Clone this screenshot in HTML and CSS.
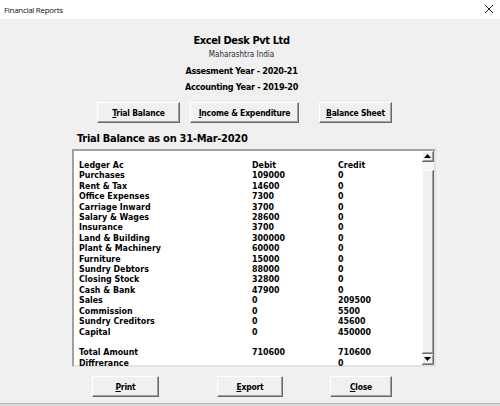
FILE: index.html
```html
<!DOCTYPE html>
<html lang="en">
  <head>
    <meta charset="UTF-8" />
    <title>Financial Reports</title>
    <link rel="stylesheet" href="styles.css">
  </head>

  <body>
    <div class="window">
      <div class="titlebar">
        <span class="title">Financial Reports</span>
        <svg class="close" width="10" height="10" viewBox="0 0 10 10">
          <path d="M1 1 L9 9 M9 1 L1 9" stroke="#222" stroke-width="1" fill="none" />
        </svg>
      </div>

      <div class="form">
        <div class="header">
          <h1>Excel Desk Pvt Ltd</h1>
          <p class="place">Maharashtra India</p>
          <p class="year">Assesment Year - 2020-21</p>
          <p class="year">Accounting Year - 2019-20</p>
        </div>

        <div class="tabs">
          <button class="btn tab-trial"><u>T</u>rial Balance</button>
          <button class="btn tab-income"><u>I</u>ncome &amp; Expenditure</button>
          <button class="btn tab-sheet"><u>B</u>alance Sheet</button>
        </div>

        <h2 class="caption">Trial Balance as on 31-Mar-2020</h2>

        <div class="listbox">
          <div class="rows">
            <span>Ledger Ac</span><span>Debit</span><span>Credit</span>
            <span>Purchases</span><span>109000</span><span>0</span>
            <span>Rent &amp; Tax</span><span>14600</span><span>0</span>
            <span>Office Expenses</span><span>7300</span><span>0</span>
            <span>Carriage Inward</span><span>3700</span><span>0</span>
            <span>Salary &amp; Wages</span><span>28600</span><span>0</span>
            <span>Insurance</span><span>3700</span><span>0</span>
            <span>Land &amp; Building</span><span>300000</span><span>0</span>
            <span>Plant &amp; Machinery</span><span>60000</span><span>0</span>
            <span>Furniture</span><span>15000</span><span>0</span>
            <span>Sundry Debtors</span><span>88000</span><span>0</span>
            <span>Closing Stock</span><span>32800</span><span>0</span>
            <span>Cash &amp; Bank</span><span>47900</span><span>0</span>
            <span>Sales</span><span>0</span><span>209500</span>
            <span>Commission</span><span>0</span><span>5500</span>
            <span>Sundry Creditors</span><span>0</span><span>45600</span>
            <span>Capital</span><span>0</span><span>450000</span>
            <span>&nbsp;</span><span></span><span></span>
            <span>Total Amount</span><span>710600</span><span>710600</span>
            <span>Diffrerance</span><span></span><span>0</span>
          </div>
          <div class="scrollbar">
            <div class="arrow up">
              <svg width="7" height="4" viewBox="0 0 7 4"><path d="M3.5 0 L7 4 L0 4 Z" fill="#000" /></svg>
            </div>
            <div class="track"></div>
            <div class="thumb"></div>
            <div class="arrow down">
              <svg width="7" height="4" viewBox="0 0 7 4"><path d="M0 0 L7 0 L3.5 4 Z" fill="#000" /></svg>
            </div>
          </div>
        </div>

        <div class="actions">
          <button class="btn act-print"><u>P</u>rint</button>
          <button class="btn act-export"><u>E</u>xport</button>
          <button class="btn act-close"><u>C</u>lose</button>
        </div>
      </div>
      <div class="edge"></div>
    </div>
  </body>
</html>
```

FILE: styles.css
```css
body {
  margin: 0;
  background: #f0f0f0;
  font-family: "DejaVu Sans Condensed", "DejaVu Sans", sans-serif;
  color: #000;
}

.window {
  width: 500px;
  height: 406px;
  display: flex;
  flex-direction: column;
}

.titlebar {
  height: 19px;
  background: #fff;
  display: flex;
  align-items: center;
  justify-content: space-between;
  padding: 0 6px 0 4px;
}

.title {
  font-family: "Open Sans", "Noto Sans", sans-serif;
  font-size: 8px;
  letter-spacing: -0.3px;
  color: #111;
}

.close {
  margin-top: -2px;
}

.form {
  flex: 1;
  background: #f0f0f0;
}

.header {
  text-align: center;
  padding: 14px 17px 0 0;
}

.header h1 {
  margin: 0;
  font-size: 11px;
  letter-spacing: -0.4px;
  line-height: 16px;
  font-weight: bold;
}

.header p {
  margin: 0;
}

.place {
  font-size: 8px;
  line-height: 12px;
  color: #2b2b3a;
}

.year {
  font-size: 9px;
  letter-spacing: -0.28px;
  line-height: 16px;
  font-weight: bold;
}

.place + .year {
  margin-top: 2px;
}

.btn {
  height: 21px;
  padding: 0;
  background: #f0f0f0;
  border: 1px solid;
  border-color: #fff #696969 #696969 #fff;
  box-shadow: inset -1px -1px 0 #a0a0a0;
  font-family: "DejaVu Sans Condensed", "DejaVu Sans", sans-serif;
  font-size: 8.5px;
  letter-spacing: -0.2px;
  font-weight: bold;
  color: #000;
}

.tabs {
  display: flex;
  margin-top: 7px;
  padding-left: 97px;
}

.tab-trial {
  width: 83px;
}

.tab-income {
  width: 109px;
  margin-left: 10px;
}

.tab-sheet {
  width: 73px;
  margin-left: 20px;
}

.caption {
  margin: 8px 0 0 77px;
  font-size: 11px;
  letter-spacing: -0.27px;
  line-height: 16px;
  font-weight: bold;
}

.listbox {
  display: flex;
  width: 360px;
  height: 214px;
  margin: 2px 0 0 72px;
  background: #fff;
  border: 2px solid;
  border-color: #a0a0a0 #e3e3e3 #e3e3e3 #a0a0a0;
}

.rows {
  flex: 1;
  display: grid;
  grid-template-columns: 173px 86px auto;
  grid-auto-rows: 10.42px;
  align-content: start;
  padding: 9px 0 0 5px;
  font-size: 8.8px;
  line-height: 10.42px;
  font-weight: bold;
  white-space: nowrap;
}

.scrollbar {
  width: 12px;
  display: flex;
  flex-direction: column;
  background: #f0f0f0;
}

.arrow {
  height: 10px;
  display: flex;
  align-items: center;
  justify-content: center;
  background: #f0f0f0;
  border-right: 1px solid #696969;
  border-bottom: 1px solid #696969;
  box-shadow: inset 1px 1px 0 #fff, inset -1px -1px 0 #a0a0a0;
}

.track {
  height: 8px;
  background: #f6f6f6;
}

.thumb {
  flex: 1;
  background: #f0f0f0;
  border-right: 1px solid #696969;
  border-bottom: 1px solid #696969;
  box-shadow: inset 1px 1px 0 #fff, inset -1px -1px 0 #a0a0a0;
}

.actions {
  display: flex;
  margin-top: 9px;
  padding-left: 92px;
}

.act-print {
  width: 67px;
}

.act-export {
  width: 66px;
  margin-left: 58px;
}

.act-close {
  width: 62px;
  margin-left: 47px;
}

.edge {
  height: 2px;
  background: #dadada;
  border-top: 1px solid #b4b4b4;
}
```
